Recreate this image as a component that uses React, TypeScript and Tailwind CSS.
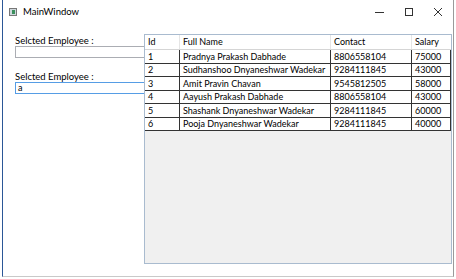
import React from 'react';

const employees = [
  { id: 1, name: 'Pradnya Prakash Dabhade', contact: '8806558104', salary: '75000' },
  { id: 2, name: 'Sudhanshoo Dnyaneshwar Wadekar', contact: '9284111845', salary: '43000' },
  { id: 3, name: 'Amit Pravin Chavan', contact: '9545812505', salary: '58000' },
  { id: 4, name: 'Aayush Prakash Dabhade', contact: '8806558104', salary: '43000' },
  { id: 5, name: 'Shashank Dnyaneshwar Wadekar', contact: '9284111845', salary: '60000' },
  { id: 6, name: 'Pooja Dnyaneshwar Wadekar', contact: '9284111845', salary: '40000' },
];

const font = { fontFamily: '"Segoe UI", Lato, "Noto Sans", sans-serif' };

const App: React.FC = () => {
  return (
    <div className="w-[456px] h-[279px] bg-white text-black text-[9px] overflow-hidden" style={font}>
      <div className="ml-[2px] w-[452px] h-[277px] flex flex-col border-l border-l-[#2b5797] border-r border-r-[#9a9a9a] border-b border-b-[#c9c9c9]">
        {/* Title bar */}
        <div className="h-[24px] flex items-center shrink-0">
          <div className="ml-[6px] w-[8px] h-[8px] border border-[#777] bg-[#cfd8dc] flex items-center justify-center">
            <div className="w-[3px] h-[4px] bg-[#3a8f5c]" />
          </div>
          <span className="ml-[6px] leading-none text-[9.5px]">MainWindow</span>
          <div className="ml-auto flex items-center h-full">
            <div className="w-[29px] flex justify-center">
              <div className="w-[9px] h-px bg-[#333]" />
            </div>
            <div className="w-[29px] flex justify-center">
              <div className="w-[8px] h-[8px] border border-[#333]" />
            </div>
            <div className="w-[30px] flex justify-center">
              <svg width="10" height="10" viewBox="0 0 10 10">
                <path d="M1 1 L9 9 M9 1 L1 9" stroke="#333" strokeWidth="1" />
              </svg>
            </div>
          </div>
        </div>

        {/* Content */}
        <div className="flex flex-1">
          <div className="w-[141px] pl-[12px] shrink-0 text-[9.5px]">
            <div className="mt-[11px] leading-[11px] whitespace-nowrap">Selcted Employee :</div>
            <div className="h-[12px] border border-r-0 border-[#abadb3]" />
            <div className="mt-[13px] leading-[11px] whitespace-nowrap">Selcted Employee :</div>
            <div className="h-[12px] border border-r-0 border-[#569de5] pl-[2px] leading-[10px] text-[9px]">a</div>
          </div>

          <div className="mt-[10px] w-[308px] h-[230px] border border-[#a9bbcf] bg-[#f0f0f0] flex flex-col">
            <div className="flex h-[15px] bg-white border-b border-[#d5d5d5] leading-[14px] whitespace-nowrap">
              <div className="w-[35px] pl-[3px] border-r border-[#e5e5e5]">Id</div>
              <div className="w-[151px] pl-[3px] border-r border-[#e5e5e5]">Full Name</div>
              <div className="w-[81px] pl-[3px] border-r border-[#e5e5e5]">Contact</div>
              <div className="flex-1 pl-[3px]">Salary</div>
            </div>
            {employees.map((e, i) => (
              <div
                key={e.id}
                className={`flex bg-white border-b border-[#333] whitespace-nowrap ${i % 2 === 0 ? 'h-[14px] leading-[13px]' : 'h-[13px] leading-[12px]'}`}
              >
                <div className="w-[35px] pl-[3px] border-r border-[#333]">{e.id}</div>
                <div className="w-[151px] pl-[3px] border-r border-[#333] overflow-hidden">{e.name}</div>
                <div className="w-[81px] pl-[3px] border-r border-[#333]">{e.contact}</div>
                <div className="w-[39px] pl-[3px] border-r border-[#333]">{e.salary}</div>
              </div>
            ))}
          </div>
        </div>
      </div>
    </div>
  );
};

export default App;
